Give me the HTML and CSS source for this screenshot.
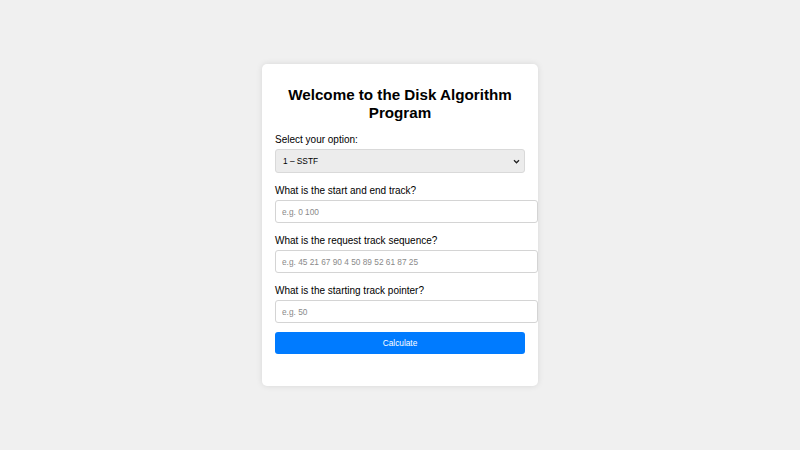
FILE: index.html
```html
<!DOCTYPE html>
<html lang="en">
<head>
<meta charset="UTF-8">
<title>Disk Algorithm Program</title>
<link rel="stylesheet" href="styles.css">
</head>
<body>
<div class="card">
  <h2 class="title">Welcome to the Disk Algorithm Program</h2>
  <form class="form">
    <label class="label" for="opt">Select your option:</label>
    <select class="select" id="opt">
      <option>1 – SSTF</option>
      <option>2 – SCAN</option>
      <option>3 – C-SCAN</option>
    </select>
    <label class="label" for="range">What is the start and end track?</label>
    <input class="input" id="range" type="text" placeholder="e.g. 0 100">
    <label class="label" for="seq">What is the request track sequence?</label>
    <input class="input" id="seq" type="text" placeholder="e.g. 45 21 67 90 4 50 89 52 61 87 25">
    <label class="label" for="ptr">What is the starting track pointer?</label>
    <input class="input" id="ptr" type="text" placeholder="e.g. 50">
    <button class="button" type="button">Calculate</button>
  </form>
</div>
</body>
</html>
```
FILE: styles.css
```css
html, body {
  margin: 0;
  padding: 0;
}
body {
  background: #f0f0f0;
  font-family: "Liberation Sans", Arial, sans-serif;
  height: 100vh;
  display: flex;
  align-items: center;
  justify-content: center;
}
.card {
  box-sizing: border-box;
  width: 276px;
  padding: 13px 13px 32px;
  background: #ffffff;
  border-radius: 5px;
  box-shadow: 0 0 6px rgba(0, 0, 0, 0.1);
}
.title {
  margin: 9px 0 12px;
  font-size: 15.2px;
  line-height: 18px;
  font-weight: bold;
  text-align: center;
  color: #000;
}
.form {
  display: flex;
  flex-direction: column;
  align-items: flex-start;
}
.label {
  font-size: 10px;
  line-height: 11.5px;
  color: #000;
  margin-bottom: 4px;
}
.select {
  box-sizing: border-box;
  width: 250px;
  height: 24px;
  margin-bottom: 11.5px;
  padding: 0 7px;
  font-family: "Liberation Sans", Arial, sans-serif;
  font-size: 8.3px;
  color: #000;
  border: 1px solid #d9d9d9;
  border-radius: 3px;
  -webkit-appearance: none;
  appearance: none;
  background-color: #ececec;
  background-image: url("data:image/svg+xml,%3Csvg xmlns='http://www.w3.org/2000/svg' width='8' height='6' viewBox='0 0 8 6'%3E%3Cpath d='M1 1.5 L4 4.5 L7 1.5' fill='none' stroke='%23222' stroke-width='1.6'/%3E%3C/svg%3E");
  background-repeat: no-repeat;
  background-position: right 4px center;
  background-size: 7px 5px;
}
.input {
  box-sizing: border-box;
  width: 263px;
  height: 23px;
  margin-bottom: 11.5px;
  padding: 0 6px;
  font-family: "Liberation Sans", Arial, sans-serif;
  font-size: 8.3px;
  background: #fff;
  border: 1px solid #d4d4d4;
  border-radius: 3px;
}
.input::placeholder {
  color: #8a8a8a;
}
.button {
  box-sizing: border-box;
  width: 250px;
  height: 22px;
  margin-top: -2.5px;
  background: #007bff;
  color: #fff;
  border: none;
  border-radius: 3px;
  font-family: "Liberation Sans", Arial, sans-serif;
  font-size: 8.3px;
}
```
